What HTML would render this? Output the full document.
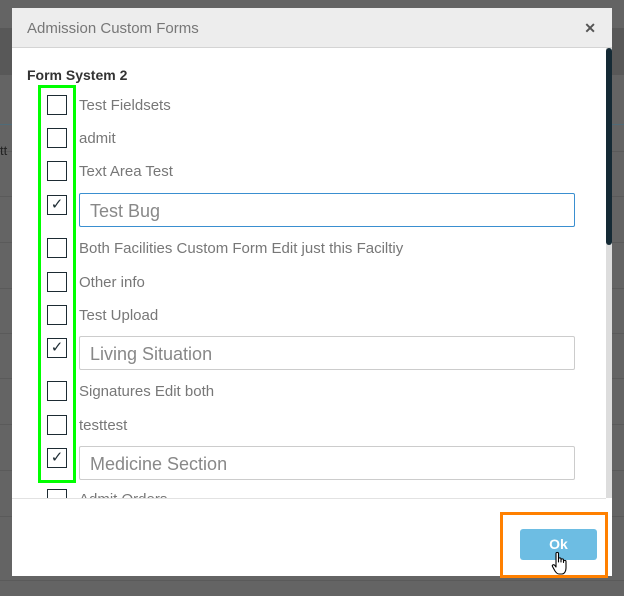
<!DOCTYPE html>
<html><head><style>
body{margin:0;width:624px;height:596px;overflow:hidden;background:#646464;font-family:"Liberation Sans",Arial,sans-serif;position:relative}
.bgl{position:absolute;left:0;width:624px;height:1px;background:#5a5a5a}
.modal{position:absolute;left:12px;top:8px;width:600px;height:568px;background:#fff}
.hdr{position:absolute;left:0;top:0;width:600px;height:39px;background:#ededed;border-bottom:1px solid #d4d4d4}
.hdr span{position:absolute;left:15px;top:12px;font-size:15px;color:#777}
.x{position:absolute;right:16px;top:12px;font-size:14px;font-weight:bold;color:#555}
.cb{position:absolute;left:47px;width:18px;height:18px;border:1px solid #1d2b33;background:#fff;font-size:15px;line-height:18px;text-align:center;color:#1d2b33}
.lb{position:absolute;left:79px;font-size:15px;color:#777}
.inp{position:absolute;left:79px;width:494px;height:32px;border:1px solid #ccc;border-radius:2px;font-size:18px;color:#888;line-height:34px;text-indent:10px;box-sizing:content-box}
</style></head><body>
<div style="position:absolute;left:0;top:28px;width:624px;height:47px;background:#585858"></div>
<div class="bgl" style="top:124px;background:#4f6b78"></div>
<div class="bgl" style="top:151px"></div><div class="bgl" style="top:196px"></div>
<div class="bgl" style="top:242px"></div><div class="bgl" style="top:288px"></div>
<div class="bgl" style="top:333px"></div><div class="bgl" style="top:378px"></div>
<div class="bgl" style="top:424px"></div><div class="bgl" style="top:470px"></div>
<div class="bgl" style="top:516px"></div><div class="bgl" style="top:580px"></div>
<div style="position:absolute;left:0;top:143px;font-size:13px;color:#222">tt</div>
<div class="modal">
<div class="hdr"><span>Admission Custom Forms</span><div class="x">✕</div></div>
<div style="position:absolute;left:594px;top:40px;width:6px;height:450px;background:#ddd"></div>
<div style="position:absolute;left:594px;top:40px;width:6px;height:197px;background:#152a35;border-radius:3px"></div>
<div style="position:absolute;left:0;top:490px;width:594px;height:1px;background:#e2e2e2"></div>
<div style="position:absolute;left:508px;top:521px;width:77px;height:31px;background:#6dbde3;border-radius:3px;color:#fff;font-size:14px;font-weight:bold;text-align:center;line-height:31px">Ok</div>
</div>
<div style="position:absolute;left:27px;top:67px;font-size:14px;font-weight:bold;color:#333">Form System 2</div>
<div style="position:absolute;left:0;top:0;width:624px;height:498px;overflow:hidden">
<div class="cb" style="top:95px"></div><div class="lb" style="top:97px">Test Fieldsets</div>
<div class="cb" style="top:128px"></div><div class="lb" style="top:130px">admit</div>
<div class="cb" style="top:161px"></div><div class="lb" style="top:163px">Text Area Test</div>
<div class="cb" style="top:195px">✓</div><div class="inp" style="top:193px;border-color:#3a8fd0">Test Bug</div>
<div class="cb" style="top:238px"></div><div class="lb" style="top:240px">Both Facilities Custom Form Edit just this Faciltiy</div>
<div class="cb" style="top:272px"></div><div class="lb" style="top:274px">Other info</div>
<div class="cb" style="top:305px"></div><div class="lb" style="top:307px">Test Upload</div>
<div class="cb" style="top:338px">✓</div><div class="inp" style="top:336px">Living Situation</div>
<div class="cb" style="top:381px"></div><div class="lb" style="top:383px">Signatures Edit both</div>
<div class="cb" style="top:415px"></div><div class="lb" style="top:417px">testtest</div>
<div class="cb" style="top:448px">✓</div><div class="inp" style="top:446px">Medicine Section</div>
<div class="cb" style="top:489px"></div><div class="lb" style="top:491px">Admit Orders</div>
</div>
<div style="position:absolute;left:38px;top:85px;width:32px;height:392px;border:3px solid #0f0"></div>
<div style="position:absolute;left:500px;top:512px;width:102px;height:60px;border:3px solid #ff8000"></div>
<svg style="position:absolute;left:551px;top:551px" width="20" height="26" viewBox="0 0 20 26"><path d="M5 2.5c0-1.5 2.5-1.5 2.5 0V11V8c0-1.5 2.5-1.5 2.5 0v3V9c0-1.5 2.5-1.5 2.5 0v2.5V10.5c0-1.5 2.5-1.5 2.5 0V17c0 3-1.5 6-4 6H8c-2 0-3-1.5-4-3l-2.5-4.5c-0.8-1.4 1.2-2.6 2.2-1.2L5 16Z" fill="#fff" stroke="#000" stroke-width="1.1" stroke-linejoin="round"/></svg>
</body></html>
